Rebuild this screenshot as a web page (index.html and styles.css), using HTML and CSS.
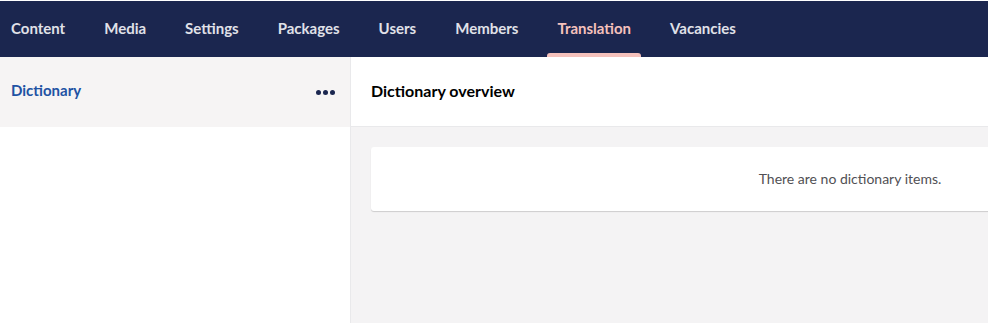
FILE: index.html
```html
<!DOCTYPE html>
<html lang="en">

<head>
    <meta charset="UTF-8">
    <meta name="viewport" content="width=device-width, initial-scale=1.0">
    <title>Translation - Dictionary</title>
    <link rel="stylesheet" href="styles.css">
</head>

<body>
    <!-- Top sections bar -->
    <header class="app-header">
        <ul class="sections">
            <li class="section"><a href="#">Content</a></li>
            <li class="section"><a href="#">Media</a></li>
            <li class="section"><a href="#">Settings</a></li>
            <li class="section"><a href="#">Packages</a></li>
            <li class="section"><a href="#">Users</a></li>
            <li class="section"><a href="#">Members</a></li>
            <li class="section active"><a href="#">Translation</a></li>
            <li class="section"><a href="#">Vacancies</a></li>
        </ul>
    </header>

    <div class="app-body">
        <!-- Tree -->
        <aside class="tree">
            <div class="tree-root">
                <a href="#" class="tree-title">Dictionary</a>
                <button class="tree-options" aria-label="Options">
                    <span class="dot"></span><span class="dot"></span><span class="dot"></span>
                </button>
            </div>
        </aside>

        <!-- Editor -->
        <main class="editor">
            <div class="editor-header">
                <h1>Dictionary overview</h1>
            </div>
            <div class="editor-content">
                <div class="box">
                    There are no dictionary items.
                </div>
            </div>
        </main>
    </div>
</body>

</html>
```

FILE: styles.css
```css
body {
    margin: 0;
    padding: 0;
    font-family: 'Lato', 'Open Sans', sans-serif;
    font-size: 15px;
    background: #fff;
    overflow: hidden;
    height: 323px;
}

.app-header {
    margin-top: 1px;
    height: 56px;
    background-color: #1b264f;
}

.sections {
    list-style: none;
    margin: 0;
    padding: 0 0 0 1px;
    display: flex;
    gap: 19px;
    height: 100%;
}

.section {
    position: relative;
    display: flex;
    align-items: center;
    padding: 0 10px;
}

.section a {
    color: #e0e1e8;
    text-decoration: none;
    font-weight: 700;
    font-size: 15px;
    padding-bottom: 3px;
}

.section.active a {
    color: #f5c1bc;
}

.section.active::after {
    content: "";
    position: absolute;
    left: 0;
    right: 0;
    bottom: 0;
    height: 4px;
    background-color: #f5c1bc;
    border-radius: 3px 3px 0 0;
}

.app-body {
    display: flex;
    height: 266px;
}

.tree {
    width: 350px;
    flex-shrink: 0;
    border-right: 1px solid #e9e9eb;
    background: #fff;
}

.tree-root {
    height: 70px;
    background-color: #f6f4f4;
    display: flex;
    align-items: center;
    justify-content: space-between;
    padding: 0 15px 0 11px;
}

.tree-title {
    color: #2152a3;
    font-weight: 700;
    font-size: 15px;
    text-decoration: none;
    padding-bottom: 4px;
}

.tree-options {
    border: none;
    background: none;
    padding: 0;
    display: flex;
    gap: 2px;
    margin-top: 1px;
}

.dot {
    width: 5px;
    height: 5px;
    border-radius: 50%;
    background-color: #1b264f;
}

.editor {
    flex: 1;
    min-width: 0;
    background-color: #f4f3f4;
}

.editor-header {
    height: 69px;
    background: #fff;
    border-bottom: 1px solid #e9e9eb;
    display: flex;
    align-items: center;
    padding-left: 20px;
}

.editor-header h1 {
    margin: 0;
    font-size: 16px;
    font-weight: 700;
    color: #000;
    padding-bottom: 2px;
}

.editor-content {
    padding: 20px 0 0 20px;
}

.box {
    width: 958px;
    height: 64px;
    background: #fff;
    border-radius: 3px;
    box-shadow: 0 1px 1px rgba(0, 0, 0, 0.16);
    display: flex;
    align-items: center;
    justify-content: center;
    color: #515054;
    font-size: 14px;
    padding-bottom: 2px;
    box-sizing: border-box;
}
```
